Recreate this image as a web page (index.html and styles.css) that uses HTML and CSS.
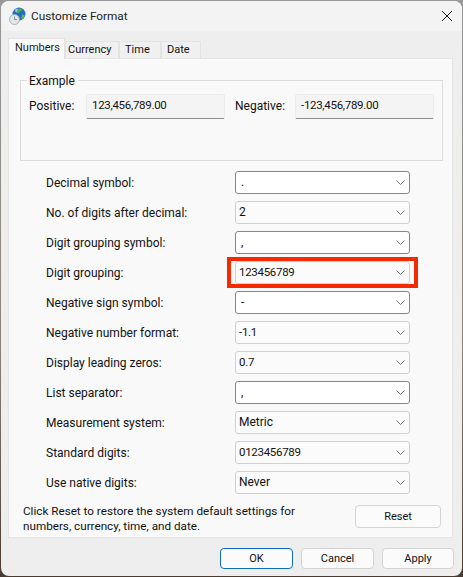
FILE: index.html
```html
<!DOCTYPE html>
<html lang="en">
<head>
    <meta charset="UTF-8">
    <title>Customize Format</title>
    <link rel="stylesheet" href="styles.css">
</head>
<body>
    <div class="dialog">
        <div class="titlebar">
            <svg class="title-icon" width="17" height="20" viewBox="0 0 17 20">
                <circle cx="10" cy="8" r="6.5" fill="#1c6cc8"/>
                <circle cx="8" cy="4.500" r="2" fill="#8fc4f0"/>
                <path d="M9 3c1.500-1 3.200-.8 4.200 0 .5 1-.4 1.800-1.400 2.100-.3 1.200-1.300 1.100-1.700 2-.8.2-1.600-.5-1.900-1.400-.1-1 .1-2 .8-2.700z" fill="#4fae3c"/>
                <path d="M13 8.500c1-.3 2.200.1 2.900.7-.4 1.800-1.400 3.200-2.900 3.900-.8-.8-.9-1.900-.5-2.600.3-.6.300-1.400.5-2z" fill="#63b84a"/>
                <circle cx="5.500" cy="13.500" r="5" fill="#e4e7ea" stroke="#9aa3ab" stroke-width="0.8"/>
                <path d="M5.500 10.500v3h2.500" fill="none" stroke="#6d7780" stroke-width="0.8"/>
            </svg>
            <span class="title-text">Customize Format</span>
            <svg class="close" width="10" height="10" viewBox="0 0 10 10">
                <path d="M0 0L10 10M10 0L0 10" stroke="#1a1a1a" stroke-width="1" fill="none"/>
            </svg>
        </div>

        <div class="content">
            <div class="tabs">
                <div class="tab active">Numbers</div>
                <div class="tab tab-currency">Currency</div>
                <div class="tab tab-time">Time</div>
                <div class="tab tab-date">Date</div>
            </div>

            <div class="panel">
                <fieldset class="group">
                    <legend>Example</legend>
                    <div class="example-row">
                        <span class="example-label">Positive:</span>
                        <div class="example-value digits">123,456,789.00</div>
                        <span class="example-label neg-label">Negative:</span>
                        <div class="example-value digits">-123,456,789.00</div>
                    </div>
                </fieldset>

                <div class="settings">
                    <label>Decimal symbol:</label>
                    <div class="combo editable">.<svg class="chevron" viewBox="0 0 10 6"><path d="M.5 .5l4.500 4.500 4.500-4.500"/></svg></div>
                    <label>No. of digits after decimal:</label>
                    <div class="combo">2<svg class="chevron" viewBox="0 0 10 6"><path d="M.5 .5l4.500 4.500 4.500-4.500"/></svg></div>
                    <label>Digit grouping symbol:</label>
                    <div class="combo editable">,<svg class="chevron" viewBox="0 0 10 6"><path d="M.5 .5l4.500 4.500 4.500-4.500"/></svg></div>
                    <label>Digit grouping:</label>
                    <div class="combo digits highlighted">123456789<svg class="chevron" viewBox="0 0 10 6"><path d="M.5 .5l4.500 4.500 4.500-4.500"/></svg></div>
                    <label>Negative sign symbol:</label>
                    <div class="combo editable">-<svg class="chevron" viewBox="0 0 10 6"><path d="M.5 .5l4.500 4.500 4.500-4.500"/></svg></div>
                    <label>Negative number format:</label>
                    <div class="combo digits">-1.1<svg class="chevron" viewBox="0 0 10 6"><path d="M.5 .5l4.500 4.500 4.500-4.500"/></svg></div>
                    <label>Display leading zeros:</label>
                    <div class="combo digits">0.7<svg class="chevron" viewBox="0 0 10 6"><path d="M.5 .5l4.500 4.500 4.500-4.500"/></svg></div>
                    <label>List separator:</label>
                    <div class="combo editable">,<svg class="chevron" viewBox="0 0 10 6"><path d="M.5 .5l4.500 4.500 4.500-4.500"/></svg></div>
                    <label>Measurement system:</label>
                    <div class="combo">Metric<svg class="chevron" viewBox="0 0 10 6"><path d="M.5 .5l4.500 4.500 4.500-4.500"/></svg></div>
                    <label>Standard digits:</label>
                    <div class="combo digits">0123456789<svg class="chevron" viewBox="0 0 10 6"><path d="M.5 .5l4.500 4.500 4.500-4.500"/></svg></div>
                    <label>Use native digits:</label>
                    <div class="combo">Never<svg class="chevron" viewBox="0 0 10 6"><path d="M.5 .5l4.500 4.500 4.500-4.500"/></svg></div>
                </div>

                <div class="reset-row">
                    <p class="hint">Click Reset to restore the system default settings for numbers, currency, time, and date.</p>
                    <button class="btn reset">Reset</button>
                </div>
            </div>
        </div>

        <div class="footer">
            <button class="btn primary">OK</button>
            <button class="btn">Cancel</button>
            <button class="btn apply">Apply</button>
        </div>
    </div>
</body>
</html>
```

FILE: styles.css
```css
html, body {
    height: 100%;
}

body {
    margin: 0;
    background: linear-gradient(#999 0%, #8a8278 60%, #4a3a30 100%);
    font-family: Roboto, "Liberation Sans", sans-serif;
    font-size: 12px;
    color: #111;
    overflow: hidden;
}

.dialog {
    box-sizing: border-box;
    width: 461px;
    height: 575px;
    margin: 1px 0 0 1px;
    background: #eeeeee;
    border-radius: 8px;
    display: flex;
    flex-direction: column;
    overflow: hidden;
}

.titlebar {
    height: 30px;
    flex: none;
    background: #f3f3f3;
    display: flex;
    align-items: center;
    padding: 0 10px 0 8px;
}

.title-icon {
    margin-right: 5px;
}

.title-text {
    flex: 1;
    font-size: 11.8px;
    color: #222;
}

.content {
    flex: 1;
    padding: 7px 9px 0 7px;
    display: flex;
    flex-direction: column;
}

.tabs {
    display: flex;
    align-items: flex-end;
    height: 20px;
    position: relative;
    z-index: 1;
    font-size: 11px;
}

.tab {
    box-sizing: border-box;
    height: 17px;
    border: 1px solid #e3e3e3;
    border-bottom: none;
    background: #f0f0f0;
    line-height: 16px;
}

.tab.active {
    width: 57px;
    height: 21px;
    margin-bottom: -1px;
    background: #f9f9f9;
    color: #1a1a1a;
    padding: 1px 0 0 6px;
}

.tab-currency {
    width: 54px;
    padding-left: 2px;
}

.tab-time {
    width: 42px;
    padding-left: 5px;
}

.tab-date {
    width: 40px;
    padding-left: 5px;
}

.panel {
    box-sizing: border-box;
    height: 480px;
    background: #f9f9f9;
    border: 1px solid #e5e5e5;
    padding: 13px 9px 0 11px;
}

.group {
    box-sizing: border-box;
    height: 89px;
    margin: 0;
    padding: 0 8px;
    border: 1px solid #dcdcdc;
}

.group legend {
    padding: 1px 3px 0 2px;
    margin-left: -2px;
    line-height: 16px;
}

.example-row {
    display: flex;
    align-items: center;
    margin-top: 5px;
}

.example-label {
    width: 57px;
    flex: none;
    margin-top: -2px;
}

.neg-label {
    width: 60px;
    margin-left: 10px;
}

.example-value {
    box-sizing: border-box;
    width: 139px;
    height: 25px;
    background: #f4f4f4;
    border: 1px solid #ececec;
    border-bottom: 1px solid #8d8d8d;
    border-radius: 2px;
    padding: 3px 5px;
    line-height: 15px;
}

.digits {
    font-size: 11.5px;
    letter-spacing: -0.3px;
}

.settings {
    display: grid;
    grid-template-columns: 189px 175px;
    grid-auto-rows: 23px;
    row-gap: 7px;
    align-items: center;
    margin: 10px 0 0 26px;
}

.combo {
    box-sizing: border-box;
    height: 23px;
    background: #fbfbfb;
    border: 1px solid #d0d0d0;
    border-radius: 3px;
    padding: 0 3px;
    line-height: 21px;
    position: relative;
}

.combo.editable {
    background: #fff;
    border-color: #868686;
    padding-left: 5px;
}

.chevron {
    position: absolute;
    right: 4px;
    top: 8px;
    width: 9px;
    height: 5.4px;
    fill: none;
    stroke: #666;
    stroke-width: 1;
}

.highlighted::after {
    content: "";
    position: absolute;
    left: -9px;
    right: -9px;
    top: -5px;
    bottom: -5px;
    border: 4px solid #f62a00;
}

.reset-row {
    display: flex;
    justify-content: space-between;
    margin-top: 10px;
    margin-left: 3px;
}

.hint {
    width: 300px;
    margin: 0;
    line-height: 15px;
    font-size: 11.7px;
}

.btn {
    box-sizing: border-box;
    width: 73px;
    height: 21px;
    padding: 0;
    background: #fbfbfb;
    border: 1px solid #d4d4d4;
    border-radius: 4px;
    font: inherit;
    font-size: 11px;
    color: #111;
}

.reset {
    width: 86px;
    height: 23px;
    margin: 1px 2px 0 0;
}

.apply {
    width: 72px;
}

.primary {
    border-color: #0f6cbd;
}

.footer {
    height: 37px;
    flex: none;
    display: flex;
    justify-content: flex-end;
    gap: 8px;
    padding: 9px 8px 0 0;
    box-sizing: border-box;
}
```
